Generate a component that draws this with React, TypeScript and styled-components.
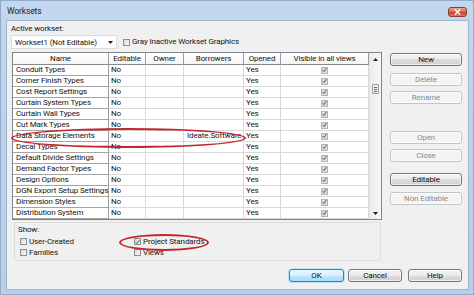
import { Fragment } from "react";
import styled, { createGlobalStyle } from "styled-components";

const GlobalStyle = createGlobalStyle`
  html, body {
    margin: 0;
    padding: 0;
  }
  body {
    font-family: Roboto, "Liberation Sans", sans-serif;
    font-size: 8px;
    letter-spacing: -0.12px;
    color: #141414;
  }
`;

type Row = { name: string; borrowers?: string };

const rows: Row[] = [
  { name: "Conduit Types" },
  { name: "Corner Finish Types" },
  { name: "Cost Report Settings" },
  { name: "Curtain System Types" },
  { name: "Curtain Wall Types" },
  { name: "Cut Mark Types" },
  { name: "Data Storage Elements", borrowers: "Ideate.Software" },
  { name: "Decal Types" },
  { name: "Default Divide Settings" },
  { name: "Demand Factor Types" },
  { name: "Design Options" },
  { name: "DGN Export Setup Settings" },
  { name: "Dimension Styles" },
  { name: "Distribution System" },
];

const headers = ["Name", "Editable", "Owner", "Borrowers", "Opened", "Visible in all views"];

function Check({ color = "#3b4f86" }: { color?: string }) {
  return (
    <svg width="6" height="6" viewBox="0 0 6 6">
      <path d="M0.8 3.2 L2.3 4.9 L5.3 0.8" fill="none" stroke={color} strokeWidth="1.1" />
    </svg>
  );
}

function Arrow({ up }: { up?: boolean }) {
  return (
    <svg width="5" height="3" viewBox="0 0 5 3">
      <path d={up ? "M0 3 L2.5 0 L5 3 Z" : "M0 0 L5 0 L2.5 3 Z"} fill="#222" />
    </svg>
  );
}

export default function App() {
  return (
    <>
      <GlobalStyle />
      <Window>
        <TitleBar>
          <Title>Worksets</Title>
          <CloseButton>
            <svg width="7" height="6" viewBox="0 0 7 6">
              <path d="M1 0.5 L6 5.5 M6 0.5 L1 5.5" stroke="#fff" strokeWidth="1.5" />
            </svg>
          </CloseButton>
        </TitleBar>

        <Client>
          <Label>Active workset:</Label>
          <TopRow>
            <Dropdown>
              <span>Workset1 (Not Editable)</span>
              <Arrow />
            </Dropdown>
            <CheckLine>
              <Box />
              <span>Gray Inactive Workset Graphics</span>
            </CheckLine>
          </TopRow>

          <MainRow>
            <LeftCol>
              <TableFrame>
                <Grid>
                  {headers.map((h) => (
                    <Cell key={h} $kind="head">
                      {h}
                    </Cell>
                  ))}
                  {rows.map((r) => (
                    <Fragment key={r.name}>
                      <Cell $kind="name">{r.name}</Cell>
                      <Cell $kind="data">No</Cell>
                      <Cell $kind="data" />
                      <Cell $kind="data" $pad={3}>
                        {r.borrowers}
                      </Cell>
                      <Cell $kind="data">Yes</Cell>
                      <Cell $kind="data" $center>
                        <GrayBox>
                          <Check />
                        </GrayBox>
                      </Cell>
                    </Fragment>
                  ))}
                </Grid>
                <ScrollBar>
                  <ScrollArrow>
                    <Arrow up />
                  </ScrollArrow>
                  <Track>
                    <Thumb>
                      <span />
                      <span />
                      <span />
                    </Thumb>
                  </Track>
                  <ScrollArrow>
                    <Arrow />
                  </ScrollArrow>
                </ScrollBar>
                <Ellipse style={{ left: -2, top: 75, width: 235, height: 20 }} />
              </TableFrame>

              <GroupBox>
                <Label>Show:</Label>
                <ShowGrid>
                  <CheckLine>
                    <Box />
                    <span>User-Created</span>
                  </CheckLine>
                  <CheckLine>
                    <Box $checked>
                      <Check />
                    </Box>
                    <span>Project Standards</span>
                  </CheckLine>
                  <CheckLine>
                    <Box />
                    <span>Families</span>
                  </CheckLine>
                  <CheckLine>
                    <Box />
                    <span>Views</span>
                  </CheckLine>
                </ShowGrid>
                <Ellipse style={{ left: 104, top: 11, width: 90, height: 17 }} />
              </GroupBox>
            </LeftCol>

            <ButtonCol>
              <Button $space={1}>New</Button>
              <Button $space={7} $disabled>
                Delete
              </Button>
              <Button $space={5} $disabled>
                Rename
              </Button>
              <Button $space={27} $disabled>
                Open
              </Button>
              <Button $space={5} $disabled>
                Close
              </Button>
              <Button $space={11}>Editable</Button>
              <Button $space={6} $disabled>
                Non Editable
              </Button>
            </ButtonCol>
          </MainRow>

          <Footer>
            <Button $default $width={55}>
              OK
            </Button>
            <Button $width={54}>Cancel</Button>
            <Button $width={54}>Help</Button>
          </Footer>
        </Client>
      </Window>
    </>
  );
}

const Window = styled.div`
  width: 474px;
  height: 295px;
  box-sizing: border-box;
  display: flex;
  flex-direction: column;
  padding: 0 5px 5px 6px;
  background: linear-gradient(180deg, #c3d8ef 0%, #bcd3eb 40%, #b7cfe9 100%);
  box-shadow: inset 0 0 0 1px #93adc9;
  overflow: hidden;
`;

const TitleBar = styled.div`
  height: 20px;
  flex: none;
  display: flex;
  align-items: flex-start;
  justify-content: space-between;
`;

const Title = styled.div`
  margin: 6px 0 0 1px;
  font-size: 8.5px;
  line-height: 11px;
  color: #1b1b1b;
`;

const CloseButton = styled.div`
  width: 19px;
  height: 10px;
  margin: 7px 2px 0 0;
  box-sizing: border-box;
  border: 1px solid #8d3b30;
  border-radius: 3px;
  display: flex;
  align-items: center;
  justify-content: center;
  background: linear-gradient(180deg, #e9a99b 0%, #d5685a 45%, #c7432f 55%, #db7b63 100%);
`;

const Client = styled.div`
  flex: 1;
  display: flex;
  flex-direction: column;
  box-sizing: border-box;
  padding: 3px 6px 7px 4px;
  background: #f0f0f0;
  border: 1px solid #9fb4cd;
`;

const Label = styled.div`
  height: 10px;
  line-height: 10px;
`;

const TopRow = styled.div`
  display: flex;
  align-items: center;
  gap: 6px;
  margin-top: 1px;
  height: 14px;
`;

const Dropdown = styled.div`
  width: 106px;
  height: 14px;
  box-sizing: border-box;
  display: flex;
  align-items: center;
  justify-content: space-between;
  padding: 0 3px 0 3px;
  background: #fff;
  border: 1px solid #dcdcdc;
`;

const CheckLine = styled.div`
  display: flex;
  align-items: center;
  gap: 2px;
  height: 11px;
  line-height: 10px;
  white-space: nowrap;
`;

const Box = styled.div<{ $checked?: boolean }>`
  width: 7px;
  height: 7px;
  box-sizing: border-box;
  border: 1px solid #8f8f8f;
  display: flex;
  align-items: center;
  justify-content: center;
  background: ${(p) =>
    p.$checked ? "linear-gradient(135deg, #d6d6d6, #f2f2f2)" : "linear-gradient(135deg, #d9d9d9, #fafafa)"};
`;

const MainRow = styled.div`
  display: flex;
  gap: 8px;
  margin-top: 3px;
  padding-left: 1px;
`;

const LeftCol = styled.div`
  width: 370px;
  display: flex;
  flex-direction: column;
`;

const TableFrame = styled.div`
  position: relative;
  height: 168px;
  box-sizing: border-box;
  display: flex;
  border: 1px solid #7f848c;
  background: #fff;
`;

const Grid = styled.div`
  display: grid;
  grid-template-columns: 96px 37px 38px 60px 37px 88px;
  grid-template-rows: 12px;
  grid-auto-rows: 11px;
  align-content: start;
`;

const Cell = styled.div<{ $kind: "head" | "name" | "data"; $pad?: number; $center?: boolean }>`
  box-sizing: border-box;
  overflow: hidden;
  white-space: nowrap;
  line-height: 10px;
  padding-left: ${(p) => (p.$kind === "name" ? 3 : p.$pad ?? 2)}px;
  border-right: 1px solid ${(p) => (p.$kind === "data" ? "#d9d9d9" : "#9d9d9d")};
  border-bottom: 1px solid ${(p) => (p.$kind === "data" ? "#d9d9d9" : "#a4a4a4")};
  ${(p) =>
    p.$kind === "head" &&
    `
    text-align: center;
    padding-left: 0;
    line-height: 11px;
    background: linear-gradient(180deg, #ffffff 0%, #f4f4f4 100%);
    border-bottom-color: #8a8a8a;
  `}
  ${(p) =>
    p.$center &&
    `
    display: flex;
    align-items: center;
    justify-content: center;
    padding-left: 0;
  `}
`;

const GrayBox = styled.div`
  width: 7px;
  height: 7px;
  box-sizing: border-box;
  border: 1px solid #b4b4b4;
  background: #d9dadc;
  display: flex;
  align-items: center;
  justify-content: center;
`;

const ScrollBar = styled.div`
  width: 12px;
  display: flex;
  flex-direction: column;
  background: linear-gradient(90deg, #ececec, #f7f7f7);
  border-left: 1px solid #e6e6e6;
`;

const ScrollArrow = styled.div`
  height: 12px;
  display: flex;
  align-items: center;
  justify-content: center;
`;

const Track = styled.div`
  flex: 1;
  display: flex;
  justify-content: center;
`;

const Thumb = styled.div`
  width: 7px;
  height: 10px;
  margin-top: 19px;
  box-sizing: border-box;
  border: 1px solid #9a9a9a;
  border-radius: 1px;
  background: #eeeeee;
  display: flex;
  flex-direction: column;
  align-items: center;
  justify-content: center;
  gap: 1px;

  span {
    width: 3px;
    height: 1px;
    background: #666;
  }
`;

const Ellipse = styled.div`
  position: absolute;
  box-sizing: border-box;
  border: 2px solid #c3262c;
  border-radius: 50%;
  pointer-events: none;
`;

const GroupBox = styled.div`
  position: relative;
  margin: 2px 1px 0 2px;
  height: 39px;
  box-sizing: border-box;
  padding: 2px 0 0 3px;
  border: 1px solid #dedede;
  border-radius: 2px;
`;

const ShowGrid = styled.div`
  display: grid;
  grid-template-columns: 114px auto;
  margin: 1px 0 0 2px;
`;

const ButtonCol = styled.div`
  width: 72px;
  display: flex;
  flex-direction: column;
`;

const Button = styled.div<{ $disabled?: boolean; $default?: boolean; $space?: number; $width?: number }>`
  width: ${(p) => p.$width ?? 72}px;
  height: 13px;
  margin-top: ${(p) => p.$space ?? 0}px;
  box-sizing: border-box;
  display: flex;
  align-items: center;
  justify-content: center;
  border-radius: 3px;
  line-height: 10px;
  border: 1px solid ${(p) => (p.$default ? "#3c7fb1" : p.$disabled ? "#c3c6c9" : "#777")};
  color: ${(p) => (p.$disabled ? "#8c8c8c" : "#111")};
  background: ${(p) =>
    p.$default
      ? "linear-gradient(180deg, #eaf6fd 0%, #d9f0fc 50%, #bee6fd 50%, #a9dbf6 100%)"
      : p.$disabled
      ? "#f4f4f4"
      : "linear-gradient(180deg, #f4f4f4 0%, #ebebeb 50%, #dddddd 50%, #cfcfcf 100%)"};
  box-shadow: ${(p) => (p.$default ? "0 0 0 1px #bfe3f6" : "inset 0 0 0 1px rgba(255,255,255,0.6)")};
`;

const Footer = styled.div`
  margin-top: auto;
  display: flex;
  justify-content: flex-end;
  gap: 4px;
  & > :last-child {
    margin-left: 2px;
  }
`;
